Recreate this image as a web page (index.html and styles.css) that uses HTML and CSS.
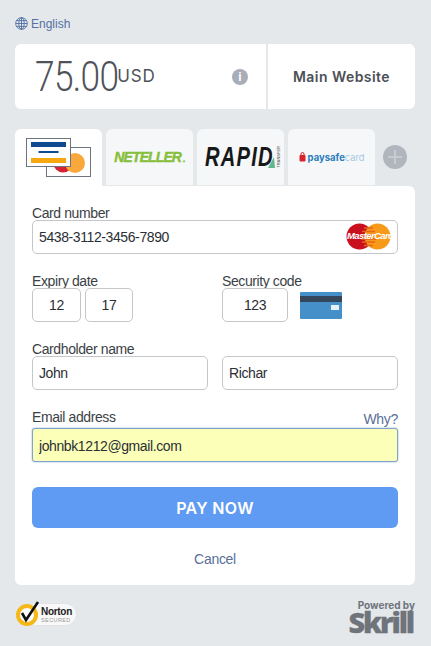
FILE: index.html
```html
<!DOCTYPE html>
<html lang="en">
<head>
  <meta charset="UTF-8" />
  <title>Skrill payment</title>
  <link rel="stylesheet" href="styles.css">
</head>
<body>
  <div class="lang">
    <svg class="globe" width="13" height="13" viewBox="0 0 13 13" fill="none" stroke="#4f6ea3" stroke-width="0.9">
      <circle cx="6.5" cy="6.5" r="5.8"/>
      <ellipse cx="6.5" cy="6.5" rx="2.7" ry="5.8"/>
      <path d="M6.5 .7v11.6M.7 6.5h11.6M1.500 3.6h10M1.500 9.4h10"/>
    </svg>
    <span>English</span>
  </div>

  <div class="summary">
    <div class="amount">
      <span class="value">75.00</span><span class="currency">USD</span>
      <span class="info">i</span>
    </div>
    <div class="merchant">Main Website</div>
  </div>

  <div class="tabs">
    <div class="tab active">
      <svg width="66" height="40" viewBox="0 0 66 40">
        <rect x="20.5" y="9.5" width="44" height="29" fill="#fff" stroke="#6d7480"/>
        <circle cx="37" cy="25" r="9.5" fill="#d5232f"/>
        <circle cx="49" cy="25" r="10" fill="#f9a93c"/>
        <rect x="0.5" y="0.5" width="44" height="28" fill="#fff" stroke="#6d7480"/>
        <rect x="5" y="4" width="35" height="5" fill="#0e4a8f"/>
        <rect x="12.500" y="13" width="20" height="2" fill="#0e4a8f"/>
        <rect x="5" y="20" width="35" height="5" fill="#f7a70f"/>
      </svg>
    </div>
    <div class="tab"><span class="neteller">NETELLER<i>.</i></span></div>
    <div class="tab rapid-tab">
      <span class="rapid">RAPID</span>
      <svg class="rapid-mark" width="7" height="11" viewBox="0 0 7 11"><path d="M0 11L6 0l1 11z" fill="#63b58c"/></svg>
      <span class="rapid-side">TRANSFER</span>
    </div>
    <div class="tab">
      <svg class="lock" width="7" height="10" viewBox="0 0 7 10">
        <path d="M2 3V2a1.500 1.500 0 0 1 3 0v1" fill="none" stroke="#d8232a" stroke-width="1"/>
        <rect x="0.5" y="3" width="6" height="6.5" rx="1" fill="#d8232a"/>
      </svg>
      <span class="paysafe">paysafe<b>card</b></span>
    </div>
    <div class="more">
      <svg width="24" height="24" viewBox="0 0 24 24"><circle cx="12" cy="12" r="12" fill="#b1b5bd"/><path d="M12 5v14M5 12h14" stroke="#cdd0d5" stroke-width="1.6"/></svg>
    </div>
  </div>

  <form class="panel" autocomplete="off">
    <label class="lbl">Card number</label>
    <div class="card-field">
      <input class="inp" value="5438-3112-3456-7890" />
      <span class="mc">
        <svg width="45" height="27" viewBox="0 0 45 27">
          <circle cx="13.5" cy="13.5" r="13" fill="#c8101e"/>
          <circle cx="31.5" cy="13.5" r="13" fill="#f79a1a"/>
          <path d="M18 5h9M16 8.500h13M15 12h15M15 16h15M16 19h13M18 22.500h9" stroke="#e8641b" stroke-width="1.4"/>
        </svg>
        <span class="mc-text">MasterCard</span>
      </span>
    </div>

    <div class="row-date">
      <div class="col-date">
        <label class="lbl">Expiry date</label>
        <div class="pair">
          <input class="inp center mm" value="12" />
          <input class="inp center yy" value="17" />
        </div>
      </div>
      <div class="col-cvv">
        <label class="lbl">Security code</label>
        <div class="pair-cvv">
          <input class="inp center cvv" value="123" />
          <svg width="42" height="27" viewBox="0 0 42 27">
            <rect width="42" height="27" rx="1" fill="#4590c8"/>
            <rect y="4" width="42" height="6" fill="#35465a"/>
            <rect x="31" y="13" width="8" height="5" fill="#e6f1f8"/>
          </svg>
        </div>
      </div>
    </div>

    <label class="lbl name-lbl">Cardholder name</label>
    <div class="names">
      <input class="inp" value="John" />
      <input class="inp" value="Richar" />
    </div>

    <div class="email-head">
      <label class="lbl">Email address</label>
      <a class="why">Why?</a>
    </div>
    <input class="inp email" value="johnbk1212@gmail.com" />

    <button class="pay" type="button">PAY NOW</button>
    <a class="cancel">Cancel</a>
  </form>

  <div class="footer">
    <div class="norton">
      <div class="norton-pill">
        <span class="norton-name">Norton</span>
        <span class="norton-sec">SECURED</span>
      </div>
      <svg class="norton-badge" width="26" height="30" viewBox="0 0 26 30">
        <circle cx="11" cy="16" r="9" fill="#fff" stroke="#f5b817" stroke-width="4"/>
        <path d="M6 14l4 7L22 3" fill="none" stroke="#111" stroke-width="2.6"/>
      </svg>
    </div>
    <div class="skrill">
      <span class="powered">Powered by</span>
      <span class="skrill-name">Skrill</span>
    </div>
  </div>
</body>
</html>
```

FILE: styles.css
```css
* {
  box-sizing: border-box;
}
html, body {
  height: 646px;
  overflow: hidden;
}
body {
  margin: 0;
  padding: 0 16px 0 15px;
  background: #e4e8eb;
  font-family: 'Liberation Sans', Arial, sans-serif;
  color: #3b3f46;
}
.lang {
  height: 44px;
  padding-top: 17px;
  display: flex;
  align-items: flex-start;
  gap: 3px;
  font-size: 12px;
  line-height: 14px;
  color: #56709f;
}
.summary {
  height: 65px;
  display: flex;
  background: #fff;
  border-radius: 6px;
}
.amount {
  width: 253px;
  display: flex;
  align-items: center;
  padding-left: 20px;
  border-right: 2px solid #e4e8eb;
}
.value {
  font-family: Roboto, sans-serif;
  font-weight: 300;
  font-size: 42px;
  letter-spacing: -0.8px;
  color: #4f5359;
  transform: scaleX(0.84);
  transform-origin: left center;
  margin-right: -18px;
}
.currency {
  font-family: Inter, sans-serif;
  font-weight: 400;
  font-size: 17px;
  letter-spacing: 0.8px;
  color: #4f5359;
  margin: -1px 0 0 1px;
}
.info {
  margin-left: auto;
  margin-right: 18px;
  width: 16px;
  height: 16px;
  border-radius: 50%;
  background: #a9adba;
  color: #fff;
  font: bold 12px/16px 'Liberation Sans', sans-serif;
  text-align: center;
}
.merchant {
  flex: 1;
  text-align: center;
  font-family: Inter, sans-serif;
  font-weight: 600;
  font-size: 14px;
  line-height: 65px;
  letter-spacing: 0.45px;
  color: #4c4f55;
}
.tabs {
  margin-top: 20px;
  height: 57px;
  display: flex;
  gap: 4px;
}
.tab {
  width: 87px;
  height: 56px;
  background: #f6f7f9;
  border-radius: 6px 6px 0 0;
  display: flex;
  align-items: center;
  justify-content: center;
}
.tab.active {
  height: 57px;
  background: #fff;
  align-items: flex-start;
  justify-content: flex-start;
  padding: 9px 0 0 11px;
}
.more {
  margin: 16px 0 0 4px;
}
.neteller {
  font-family: 'Liberation Sans', sans-serif;
  font-weight: bold;
  font-style: italic;
  font-size: 14px;
  letter-spacing: -0.9px;
  color: #86bf3a;
  -webkit-text-stroke: 0.4px #86bf3a;
}
.neteller i {
  font-size: 9px;
  margin-left: 2px;
}
.rapid-tab {
  justify-content: flex-start;
  padding-left: 8px;
}
.rapid {
  font-family: 'Liberation Sans', sans-serif;
  font-weight: bold;
  font-style: italic;
  font-size: 28px;
  line-height: 28px;
  letter-spacing: 1.7px;
  color: #17181a;
  transform: scaleX(0.72);
  transform-origin: left center;
  margin-right: -27px;
}
.rapid-mark {
  margin: 10px 0 0 -6px;
}
.rapid-side {
  font-size: 4px;
  line-height: 5px;
  writing-mode: vertical-rl;
  transform: rotate(180deg);
  color: #777;
  font-weight: bold;
  margin-left: 1px;
}
.lock {
  margin-right: 2px;
}
.paysafe {
  font-family: Inter, sans-serif;
  font-weight: 700;
  font-size: 9.5px;
  color: #2a7dbd;
}
.paysafe b {
  font-weight: 300;
  color: #8bbcdd;
}
.panel {
  display: block;
  height: 399px;
  margin: 0;
  padding: 20px 17px 0;
  background: #fff;
  border-radius: 0 6px 6px 6px;
}
.lbl {
  display: block;
  font-size: 14px;
  line-height: 14px;
  height: 14px;
  letter-spacing: -0.4px;
  color: #3b3f46;
}
.inp {
  display: block;
  width: 100%;
  height: 34px;
  padding: 0 6px;
  border: 1px solid #c4c6ca;
  border-radius: 5px;
  outline: none;
  background: #fff;
  font-family: 'Liberation Sans', Arial, sans-serif;
  font-size: 14px;
  letter-spacing: -0.4px;
  color: #2b2e33;
}
.center {
  text-align: center;
}
.card-field {
  position: relative;
}
.mc {
  position: absolute;
  right: 7px;
  top: 3px;
  width: 45px;
  height: 27px;
}
.mc svg {
  display: block;
}
.mc-text {
  position: absolute;
  left: 1px;
  top: 7px;
  font-weight: bold;
  font-style: italic;
  font-size: 9.5px;
  line-height: 12px;
  letter-spacing: -0.6px;
  color: #fff;
  white-space: nowrap;
}
.row-date {
  display: flex;
  margin-top: 20px;
}
.col-date {
  width: 190px;
}
.pair, .pair-cvv {
  display: flex;
  align-items: center;
}
.pair {
  gap: 4px;
}
.mm {
  width: 49px;
}
.yy {
  width: 48px;
}
.cvv {
  width: 66px;
  margin-right: 12px;
}
.name-lbl {
  margin-top: 20px;
}
.names {
  display: flex;
  gap: 14px;
}
.email-head {
  display: flex;
  justify-content: space-between;
  margin-top: 20px;
  height: 18px;
}
.why {
  font-size: 14px;
  line-height: 18px;
  letter-spacing: -0.3px;
  color: #5a7099;
}
.email {
  border: 1px solid #7fa3cf;
  border-radius: 3px;
  background: #fbffb8;
  box-shadow: 0 0 2px #8fb0d6;
  padding-top: 2px;
}
.pay {
  display: block;
  width: 100%;
  height: 41px;
  margin-top: 25px;
  border: 0;
  border-radius: 6px;
  background: #5f9bf2;
  color: #fff;
  font-family: Inter, sans-serif;
  font-weight: 600;
  font-size: 16px;
  letter-spacing: 0.3px;
}
.cancel {
  display: block;
  margin-top: 23px;
  text-align: center;
  font-size: 14px;
  line-height: 17px;
  letter-spacing: -0.3px;
  color: #5a7099;
}
.footer {
  display: flex;
  justify-content: space-between;
  margin-top: 14px;
}
.norton {
  position: relative;
  width: 62px;
  height: 30px;
  margin-left: 1px;
}
.norton-pill {
  position: absolute;
  left: 8px;
  top: 4px;
  width: 53px;
  height: 23px;
  padding: 3px 0 0 16px;
  background: #f8f8f8;
  border: 1px solid #e2e3e5;
  border-radius: 12px;
}
.norton-name {
  display: block;
  font-size: 10px;
  line-height: 10px;
  font-weight: bold;
  letter-spacing: -0.3px;
  color: #222;
}
.norton-sec {
  display: block;
  font-size: 5.5px;
  line-height: 7px;
  letter-spacing: 0.4px;
  color: #999;
}
.norton-badge {
  position: absolute;
  left: 0;
  top: 0;
}
.skrill {
  display: flex;
  flex-direction: column;
  align-items: flex-end;
  color: #6f747b;
}
.powered {
  font-family: Inter, sans-serif;
  font-weight: 700;
  font-size: 10px;
  line-height: 11px;
  margin-top: 1px;
}
.skrill-name {
  font-family: 'Open Sans', sans-serif;
  font-weight: 800;
  font-size: 29px;
  line-height: 22px;
  letter-spacing: -2.2px;
  padding-right: 2px;
  -webkit-text-stroke: 0.3px #6f747b;
}
```
